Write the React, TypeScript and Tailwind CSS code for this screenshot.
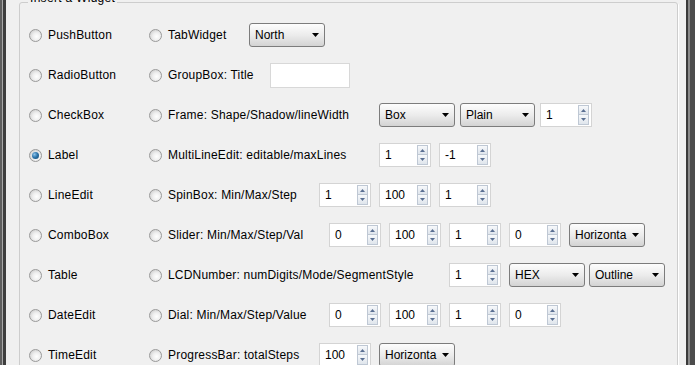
import React from 'react';

type Ctl =
  | { kind: 'spin'; value: string; ml: number }
  | { kind: 'combo'; value: string; ml: number; w?: number }
  | { kind: 'text'; ml: number };

interface Row {
  left: string;
  right: string;
  labelW: number;
  controls: Ctl[];
  checked?: boolean;
}

const rows: Row[] = [
  { left: 'PushButton', right: 'TabWidget', labelW: 81, controls: [{ kind: 'combo', value: 'North', ml: 0 }] },
  { left: 'RadioButton', right: 'GroupBox: Title', labelW: 102, controls: [{ kind: 'text', ml: 0 }] },
  {
    left: 'CheckBox',
    right: 'Frame: Shape/Shadow/lineWidth',
    labelW: 211,
    controls: [
      { kind: 'combo', value: 'Box', ml: 0 },
      { kind: 'combo', value: 'Plain', ml: 5, w: 75 },
      { kind: 'spin', value: '1', ml: 5 },
    ],
  },
  {
    left: 'Label',
    right: 'MultiLineEdit: editable/maxLines',
    labelW: 211,
    checked: true,
    controls: [
      { kind: 'spin', value: '1', ml: 0 },
      { kind: 'spin', value: '-1', ml: 8 },
    ],
  },
  {
    left: 'LineEdit',
    right: 'SpinBox: Min/Max/Step',
    labelW: 151,
    controls: [
      { kind: 'spin', value: '1', ml: 0 },
      { kind: 'spin', value: '100', ml: 8 },
      { kind: 'spin', value: '1', ml: 8 },
    ],
  },
  {
    left: 'ComboBox',
    right: 'Slider: Min/Max/Step/Val',
    labelW: 161,
    controls: [
      { kind: 'spin', value: '0', ml: 0 },
      { kind: 'spin', value: '100', ml: 8 },
      { kind: 'spin', value: '1', ml: 8 },
      { kind: 'spin', value: '0', ml: 8 },
      { kind: 'combo', value: 'Horizonta', ml: 8 },
    ],
  },
  {
    left: 'Table',
    right: 'LCDNumber: numDigits/Mode/SegmentStyle',
    labelW: 281,
    controls: [
      { kind: 'spin', value: '1', ml: 0 },
      { kind: 'combo', value: 'HEX', ml: 8 },
      { kind: 'combo', value: 'Outline', ml: 4 },
    ],
  },
  {
    left: 'DateEdit',
    right: 'Dial: Min/Max/Step/Value',
    labelW: 161,
    controls: [
      { kind: 'spin', value: '0', ml: 0 },
      { kind: 'spin', value: '100', ml: 8 },
      { kind: 'spin', value: '1', ml: 8 },
      { kind: 'spin', value: '0', ml: 8 },
    ],
  },
  {
    left: 'TimeEdit',
    right: 'ProgressBar: totalSteps',
    labelW: 151,
    controls: [
      { kind: 'spin', value: '100', ml: 0 },
      { kind: 'combo', value: 'Horizonta', ml: 8 },
    ],
  },
];

const Radio = ({ checked }: { checked?: boolean }) => (
  <span className="relative w-[13px] h-[13px] shrink-0 rounded-full border border-[#9a9a9a] bg-[radial-gradient(circle_at_60%_60%,#ffffff_0%,#efefef_40%,#c2c2c2_100%)] flex items-center justify-center">
    {checked && (
      <span className="w-[7px] h-[7px] rounded-full bg-[radial-gradient(circle_at_35%_35%,#8fc4ea_0%,#2f77ad_45%,#124469_100%)]" />
    )}
  </span>
);

const Combo = ({ value, w = 76, ml }: { value: string; w?: number; ml: number }) => (
  <div
    className="h-[24px] shrink-0 rounded-[3px] border border-[#7c7c7c] bg-linear-to-b from-[#fdfdfd] via-[#ececec] to-[#d3d3d3] flex items-center justify-between pl-[5px] pr-[5px] overflow-hidden"
    style={{ width: w, marginLeft: ml }}
  >
    <span className="whitespace-nowrap">{value}</span>
    <svg width="7" height="4" viewBox="0 0 7 4" className="shrink-0">
      <path d="M0 0h7L3.5 4z" fill="#000" />
    </svg>
  </div>
);

const Spin = ({ value, ml }: { value: string; ml: number }) => (
  <div
    className="w-[52px] h-[24px] shrink-0 border border-[#d4d4d4] bg-white flex items-center pl-[5px] pr-[2px] py-[1px]"
    style={{ marginLeft: ml }}
  >
    <span className="flex-1">{value}</span>
    <div className="flex flex-col w-[11px] h-[20px]">
      <div className="h-[10px] border border-[#bfc8d4] bg-linear-to-b from-[#f7f9fb] to-[#dfe5ec] flex items-center justify-center">
        <svg width="5" height="3" viewBox="0 0 5 3">
          <path d="M0 3h5L2.5 0z" fill="#5a6f92" />
        </svg>
      </div>
      <div className="h-[10px] border border-t-0 border-[#bfc8d4] bg-linear-to-b from-[#f7f9fb] to-[#dfe5ec] flex items-center justify-center">
        <svg width="5" height="3" viewBox="0 0 5 3">
          <path d="M0 0h5L2.5 3z" fill="#5a6f92" />
        </svg>
      </div>
    </div>
  </div>
);

const TextBox = ({ ml }: { ml: number }) => (
  <div className="w-[80px] h-[25px] shrink-0 border border-[#d8d8d8] bg-white" style={{ marginLeft: ml }} />
);

const App = () => {
  return (
    <div
      className="w-[695px] h-[365px] bg-[#f0f0f0] flex overflow-hidden text-[12px] text-black"
      style={{ fontFamily: '"Liberation Sans", Arial, sans-serif' }}
    >
      {/* left window frame */}
      <div className="flex shrink-0 h-full">
        <div className="w-[2px] bg-[#5e5e5e]" />
        <div className="w-[1px] bg-[#a9a9a9]" />
        <div className="w-[3px] bg-[#3e3e3e]" />
      </div>

      <div className="flex-1 pl-[13px] pt-[2px] pr-[8px]">
        <div className="relative h-[400px] rounded-[3px] border border-[#cdcdcd] shadow-[1px_1px_0_#ffffff]">
          <span className="absolute top-[-12px] left-[8px] px-[2px] leading-[14px] bg-[#f0f0f0] tracking-[0.3px]">
            Insert a Widget
          </span>

          <div className="flex flex-col pt-[12px] pl-[9px] tracking-[0.2px]">
            {rows.map((r) => (
              <div key={r.left} className="h-[40px] flex items-center">
                <div className="w-[120px] flex items-center gap-[6px]">
                  <Radio checked={r.checked} />
                  <span>{r.left}</span>
                </div>
                <div className="flex items-center gap-[6px]">
                  <Radio />
                  <span className="whitespace-nowrap" style={{ width: r.labelW }}>
                    {r.right}
                  </span>
                </div>
                <div className="flex items-center tracking-normal">
                  {r.controls.map((c, i) =>
                    c.kind === 'spin' ? (
                      <Spin key={i} value={c.value} ml={c.ml} />
                    ) : c.kind === 'combo' ? (
                      <Combo key={i} value={c.value} ml={c.ml} w={c.w} />
                    ) : (
                      <TextBox key={i} ml={c.ml} />
                    )
                  )}
                </div>
              </div>
            ))}
          </div>
        </div>
      </div>

      {/* right window frame */}
      <div className="flex shrink-0 h-full">
        <div className="w-[2px] bg-[#3a3a3a]" />
        <div className="w-[2px] bg-[#8a8a8a]" />
        <div className="w-[5px] bg-[#4c4c4c]" />
      </div>
    </div>
  );
};

export default App;
